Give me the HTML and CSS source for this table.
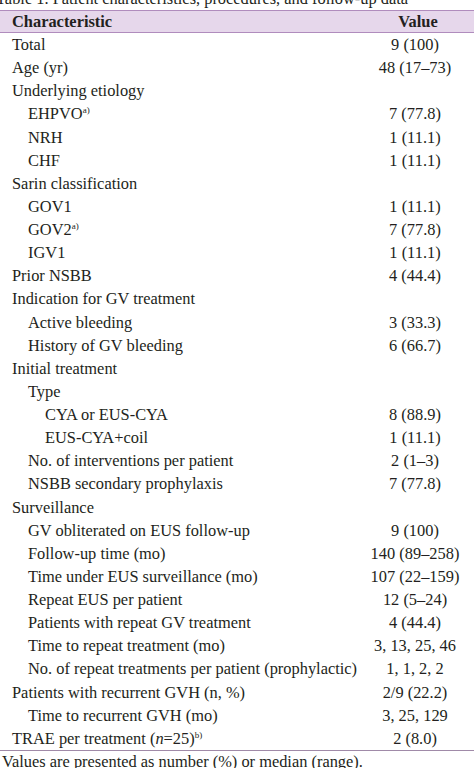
FILE: index.html
```html
<!DOCTYPE html>
<html>
<head>
<meta charset="utf-8">
<link rel="stylesheet" href="styles.css">
</head>
<body>
<div class="caption"><div class="caption-line">Table 1. Patient characteristics, procedures, and follow-up data</div></div>
<div class="table">
  <div class="row head"><div class="c">Characteristic</div><div class="v">Value</div></div>
  <div class="row"><div class="c l0">Total</div><div class="v">9 (100)</div></div>
  <div class="row"><div class="c l0">Age (yr)</div><div class="v">48 (17–73)</div></div>
  <div class="row"><div class="c l0">Underlying etiology</div><div class="v"></div></div>
  <div class="row"><div class="c l1">EHPVO<sup>a)</sup></div><div class="v">7 (77.8)</div></div>
  <div class="row"><div class="c l1">NRH</div><div class="v">1 (11.1)</div></div>
  <div class="row"><div class="c l1">CHF</div><div class="v">1 (11.1)</div></div>
  <div class="row"><div class="c l0">Sarin classification</div><div class="v"></div></div>
  <div class="row"><div class="c l1">GOV1</div><div class="v">1 (11.1)</div></div>
  <div class="row"><div class="c l1">GOV2<sup>a)</sup></div><div class="v">7 (77.8)</div></div>
  <div class="row"><div class="c l1">IGV1</div><div class="v">1 (11.1)</div></div>
  <div class="row"><div class="c l0">Prior NSBB</div><div class="v">4 (44.4)</div></div>
  <div class="row"><div class="c l0">Indication for GV treatment</div><div class="v"></div></div>
  <div class="row"><div class="c l1">Active bleeding</div><div class="v">3 (33.3)</div></div>
  <div class="row"><div class="c l1">History of GV bleeding</div><div class="v">6 (66.7)</div></div>
  <div class="row"><div class="c l0">Initial treatment</div><div class="v"></div></div>
  <div class="row"><div class="c l1">Type</div><div class="v"></div></div>
  <div class="row"><div class="c l2">CYA or EUS-CYA</div><div class="v">8 (88.9)</div></div>
  <div class="row"><div class="c l2">EUS-CYA+coil</div><div class="v">1 (11.1)</div></div>
  <div class="row"><div class="c l1">No. of interventions per patient</div><div class="v">2 (1–3)</div></div>
  <div class="row"><div class="c l1">NSBB secondary prophylaxis</div><div class="v">7 (77.8)</div></div>
  <div class="row"><div class="c l0">Surveillance</div><div class="v"></div></div>
  <div class="row"><div class="c l1">GV obliterated on EUS follow-up</div><div class="v">9 (100)</div></div>
  <div class="row"><div class="c l1">Follow-up time (mo)</div><div class="v">140 (89–258)</div></div>
  <div class="row"><div class="c l1">Time under EUS surveillance (mo)</div><div class="v">107 (22–159)</div></div>
  <div class="row"><div class="c l1">Repeat EUS per patient</div><div class="v">12 (5–24)</div></div>
  <div class="row"><div class="c l1">Patients with repeat GV treatment</div><div class="v">4 (44.4)</div></div>
  <div class="row"><div class="c l1">Time to repeat treatment (mo)</div><div class="v">3, 13, 25, 46</div></div>
  <div class="row"><div class="c l1">No. of repeat treatments per patient (prophylactic)</div><div class="v">1, 1, 2, 2</div></div>
  <div class="row"><div class="c l0">Patients with recurrent GVH (n, %)</div><div class="v">2/9 (22.2)</div></div>
  <div class="row"><div class="c l1">Time to recurrent GVH (mo)</div><div class="v">3, 25, 129</div></div>
  <div class="row"><div class="c l0">TRAE per treatment (<i>n</i>=25)<sup>b)</sup></div><div class="v">2 (8.0)</div></div>
</div>
<div class="foot">Values are presented as number (%) or median (range).</div>
</body>
</html>
```

FILE: styles.css
```css
html, body {
  margin: 0;
  padding: 0;
  background: #ffffff;
}
body {
  font-family: "Liberation Serif", "DejaVu Serif", serif;
  font-size: 16.4px;
  color: #231f20;
  width: 474px;
  overflow: hidden;
}
.caption {
  height: 10px;
  overflow: hidden;
}
.caption-line {
  margin-top: -9px;
  line-height: 16px;
  white-space: nowrap;
  margin-left: -4px;
}
.table {
  border-bottom: 1.5px solid #a08aa8;
}
.row {
  display: grid;
  grid-template-columns: 1fr 116px;
  height: 23.13px;
  line-height: 23.13px;
  white-space: nowrap;
}
.row.head {
  background: #e6d7eb;
  border-top: 1.5px solid #b08cbd;
  border-bottom: 1.5px solid #b08cbd;
  height: 21px;
  line-height: 21px;
  font-weight: bold;
}
.head .c { padding-left: 12px; }
.c.l0 { padding-left: 12px; }
.c.l1 { padding-left: 28px; }
.c.l2 { padding-left: 45px; }
.v {
  text-align: center;
  padding-right: 2px;
}
.head .v { padding-left: 4px; padding-right: 0; }
sup {
  font-size: 9px;
  line-height: 0;
  vertical-align: 6px;
}
.foot {
  padding-left: 2px;
  padding-top: 1px;
  line-height: 20px;
  white-space: nowrap;
}
```
